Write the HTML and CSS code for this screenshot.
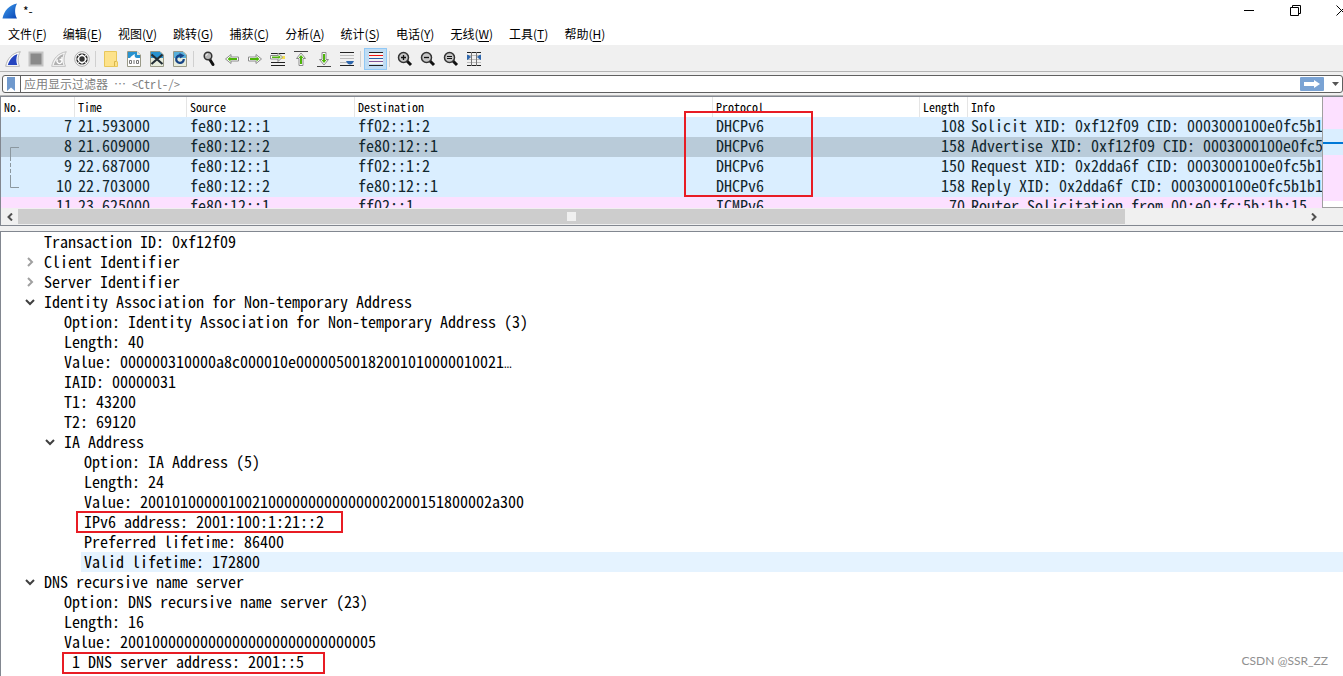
FILE: index.html
```
<!DOCTYPE html>
<html lang="zh-CN">
    <head>
        <meta charset="utf-8">
        <title>*-</title>
        <link rel="stylesheet" href="styles.css">
    </head>
    <body>
        <header class="titlebar">
            <svg class="logo" viewBox="0 0 16 16"><defs><linearGradient id="fin" x1="0" y1="0" x2="1" y2="1"><stop offset="0" stop-color="#3fa0ee"/><stop offset="1" stop-color="#0a45b5"/></linearGradient></defs><path d="M0.5 15.5C2 8 7 2 15 0.5C12.500 5 12.500 11 15 15.500Z" fill="url(#fin)"/></svg>
            <span class="title">*-</span>
            <div class="window-buttons">
                <button aria-label="最小化"><svg viewBox="0 0 11 11"><path d="M0 5.500H10"/></svg></button>
                <button aria-label="还原"><svg viewBox="0 0 11 11"><path d="M.5 2.500H8.500V10.500H.5ZM2.500 2.500V.5H10.500V8.500H8.500"/></svg></button>
                <button aria-label="关闭"><svg viewBox="0 0 11 11"><path d="M.5 .5L10.500 10.500M10.500 .5L.5 10.500"/></svg></button>
            </div>
        </header>

        <nav class="menu">
            <button>文件(<u>F</u>)</button>
            <button>编辑(<u>E</u>)</button>
            <button>视图(<u>V</u>)</button>
            <button>跳转(<u>G</u>)</button>
            <button>捕获(<u>C</u>)</button>
            <button>分析(<u>A</u>)</button>
            <button>统计(<u>S</u>)</button>
            <button>电话(<u>Y</u>)</button>
            <button>无线(<u>W</u>)</button>
            <button>工具(<u>T</u>)</button>
            <button>帮助(<u>H</u>)</button>
        </nav>

        <div class="toolbar">
            <button aria-label="开始捕获"><svg viewBox="0 0 16 16"><path d="M.7 15.300C2 8 7 2 15.300 .7C12.500 5 12.500 11 14.500 15.300Z" fill="#fff" stroke="#b5b5b5"/><path d="M2.800 14C4.500 8.500 8 4.500 12.500 3C11 7 11 11 12.300 14Z" fill="#2545bf"/></svg></button>
            <button aria-label="停止捕获" disabled><svg viewBox="0 0 16 16"><path d="M1.500 1.500H14.500V14.500H1.500Z" fill="#8a8a8a" stroke="#c4c4c4" stroke-width="2"/></svg></button>
            <button aria-label="重新开始" disabled><svg viewBox="0 0 16 16"><path d="M.7 15.300C2 8 7 2 15.300 .7C12.500 5 12.500 11 14.500 15.300Z" fill="#f4f4f4" stroke="#c0c0c0"/><path d="M2.800 14C4.500 8.500 8 4.500 12.500 3C11 7 11 11 12.300 14Z" fill="#b0b0b0"/><path d="M6.500 8.500A2.500 2.500 0 1 0 10.500 8.500M11 6V8.500H8.500" fill="none" stroke="#fff" stroke-width="1.300"/></svg></button>
            <button aria-label="捕获选项"><svg viewBox="0 0 16 16"><circle cx="8" cy="8" r="7.300" fill="#fff" stroke="#aaa"/><circle cx="8" cy="8" r="5.800" fill="#2d2d2d"/><circle cx="8" cy="8" r="3.500" fill="none" stroke="#fff" stroke-width="1.600"/><path d="M8 2.500V5M8 11V13.500M2.500 8H5M11 8H13.500M4.200 4.200L6 6M10 10L11.800 11.800M11.800 4.200L10 6M6 10L4.200 11.800" stroke="#fff"/><circle cx="8" cy="8" r="2" fill="#333"/></svg></button>
            <span class="sep"></span>
            <button aria-label="打开"><svg viewBox="0 0 16 16"><path d="M1.500 .5H13.500V10L14.500 11V15.500H1.500Z" fill="#fde28a" stroke="#e8c75a"/><path d="M11.500 15V10.500H13.500" fill="none" stroke="#d9b64a"/></svg></button>
            <button aria-label="保存"><svg viewBox="0 0 16 16"><path d="M1.500 .5H11L14.500 4V15.500H1.500Z" fill="#fff" stroke="#9a9a88"/><path d="M2 1H11L14 4V7H2Z" fill="#2892cf"/><path d="M4 7C5 5 7 4 9 3C8 5 9 7 11 7Z" fill="#fff"/><path d="M11 .5V4H14.500" fill="#e9e9dc"/><path d="M3.500 9.500H5.500V12.500H3.500ZM8 9V13M10.500 9.500H12.500V12.500H10.500Z" fill="none" stroke="#777"/></svg></button>
            <button aria-label="关闭文件"><svg viewBox="0 0 16 16"><path d="M1.500 .5H11L14.500 4V15.500H1.500Z" fill="#e8eddd" stroke="#9a9a88"/><path d="M2 1H11L14 4V7H2Z" fill="#2892cf"/><path d="M2.500 3.500L13.500 13M13.500 3.500L2.500 13" stroke="#222d35" stroke-width="2.200"/></svg></button>
            <button aria-label="重新加载"><svg viewBox="0 0 16 16"><path d="M1.500 .5H11L14.500 4V15.500H1.500Z" fill="#e8eddd" stroke="#9a9a88"/><path d="M2 1H11L14 4V7H2Z" fill="#59afd9"/><path d="M9 4.500A3.800 3.800 0 1 0 11.800 8" fill="none" stroke="#164487" stroke-width="2.200"/><path d="M7.500 2L12.500 4.500L8 7.500Z" fill="#164487"/></svg></button>
            <span class="sep"></span>
            <button aria-label="查找"><svg viewBox="0 0 16 16"><path d="M8.500 8L12 13.500" stroke="#111" stroke-width="3" stroke-linecap="round"/><circle cx="7" cy="5" r="3.800" fill="#b8b8b8" stroke="#333" stroke-width="1.500"/><path d="M5 5A2 2 0 0 1 7 3" fill="none" stroke="#eee"/></svg></button>
            <button aria-label="上一分组"><svg viewBox="0 0 16 16"><path class="arrow" d="M1.500 8L7 3.500V6H14.500V10H7V12.500Z"/><path class="core" d="M3.500 8L6.500 5.500V7H13V9H6.500V10.500Z"/></svg></button>
            <button aria-label="下一分组"><svg viewBox="0 0 16 16"><path class="arrow" d="M14.500 8L9 3.500V6H1.500V10H9V12.500Z"/><path class="core" d="M12.500 8L9.500 5.500V7H3V9H9.500V10.500Z"/></svg></button>
            <button aria-label="转到分组"><svg viewBox="0 0 16 16"><path d="M1 2.500H15M1 11.500H15M1 14.500H15" stroke="#222"/><path d="M9 6.500H15" stroke="#f5df4c" stroke-width="3"/><path class="arrow" d="M12.500 6L8 2V4.500H.5V8H8V10.500Z"/><path class="core" d="M10.800 6L8.500 4V5.500H2V7H8.500V8.200Z"/></svg></button>
            <button aria-label="首个分组"><svg viewBox="0 0 16 16"><path d="M1 .5H15" stroke="#444"/><path class="arrow" d="M8 2L12.500 7.500H10V14.500H6V7.500H3.500Z"/><path class="core" d="M8 4L10.500 7H9V13H7V7H5.500Z"/></svg></button>
            <button aria-label="末个分组"><svg viewBox="0 0 16 16"><path d="M1 15.500H15" stroke="#444"/><path class="arrow" d="M8 14L12.500 8.500H10V1.500H6V8.500H3.500Z"/><path class="core" d="M8 12L10.500 9H9V3H7V9H5.500Z"/></svg></button>
            <button aria-label="自动滚动"><svg viewBox="0 0 16 16"><path d="M1 1.500H15M1 14.500H15" stroke="#222"/><path d="M1 4.500H15M1 7.500H15M1 11.500H8" stroke="#bbb"/><path d="M7 10H15C14 12.500 12.500 13.500 11 13.500S8 12.500 7 10Z" fill="#2f67ad"/></svg></button>
            <span class="sep"></span>
            <button class="pressed" aria-label="着色分组" aria-pressed="true"><svg viewBox="0 0 16 16"><path d="M1 3H15M1 6H15M1 9H15M1 12H15" stroke="#f4f4f4" stroke-width="2"/><path d="M1 1.500H15M1 14.500H15" stroke="#222"/><path d="M1 4.500H15" stroke="#e11"/><path d="M1 7.500H15" stroke="#2b5fa8"/><path d="M1 10.500H15" stroke="#80559a"/></svg></button>
            <span class="sep"></span>
            <button aria-label="放大"><svg viewBox="0 0 16 16"><path d="M10 10L14 14" stroke="#111" stroke-width="3"/><circle cx="6.500" cy="6.500" r="5" fill="#c6c6c6" stroke="#333" stroke-width="1.500"/><path d="M4 6.500H9M6.500 4V9" stroke="#111" stroke-width="1.300"/></svg></button>
            <button aria-label="缩小"><svg viewBox="0 0 16 16"><path d="M10 10L14 14" stroke="#111" stroke-width="3"/><circle cx="6.500" cy="6.500" r="5" fill="#c6c6c6" stroke="#333" stroke-width="1.500"/><path d="M4 6.500H9" stroke="#111" stroke-width="1.300"/></svg></button>
            <button aria-label="正常大小"><svg viewBox="0 0 16 16"><path d="M10 10L14 14" stroke="#111" stroke-width="3"/><circle cx="6.500" cy="6.500" r="5" fill="#c6c6c6" stroke="#333" stroke-width="1.500"/><path d="M4 5.500H9M4 7.500H9" stroke="#111"/></svg></button>
            <button aria-label="调整列宽"><svg viewBox="0 0 16 16"><path d="M1 1.500H15M1 14.500H15" stroke="#222"/><path d="M1 4.500H15M1 8.500H15M1 11.500H15" stroke="#bbb"/><path d="M5.500 1V15M10.500 1V15" stroke="#777"/><path d="M1.500 4L4.500 6L1.500 8.500ZM14.500 4L11.500 6L14.500 8.500Z" fill="#2f67ad" stroke="#2f67ad"/></svg></button>
        </div>

        <form class="filter">
            <div class="filter-box">
                <button type="button" class="bookmark" aria-label="书签"><svg viewBox="0 0 8 14"><path d="M0 0H8V14L4 10.500L0 14Z" fill="#7099cd"/></svg></button>
                <input type="text" aria-label="显示过滤器" placeholder="应用显示过滤器 ⋯ &lt;Ctrl-/&gt;">
                <button type="button" class="apply" aria-label="应用"><svg viewBox="0 0 24 14"><path d="M4 5H14V3L20 7L14 11V9H4Z" fill="#fff"/></svg></button>
                <button type="button" class="recent" aria-label="最近的过滤器"><svg viewBox="0 0 7 4"><path d="M0 0H7L3.500 4Z" fill="#555"/></svg></button>
            </div>
        </form>

        <section class="packets">
            <div class="packet-view">
                <div class="packet-list">
                    <table>
                        <colgroup>
                            <col class="c-no"><col class="c-time"><col class="c-source"><col class="c-dest"><col class="c-protocol"><col class="c-length"><col>
                        </colgroup>
                        <thead>
                            <tr><th>No.</th><th>Time</th><th>Source</th><th>Destination</th><th>Protocol</th><th>Length</th><th>Info</th></tr>
                        </thead>
                        <tbody>
                            <tr class="udp"><td class="num">7</td><td>21.593000</td><td>fe80:12::1</td><td>ff02::1:2</td><td>DHCPv6</td><td class="num">108</td><td>Solicit XID: 0xf12f09 CID: 0003000100e0fc5b1b15</td></tr>
                            <tr class="udp selected"><td class="num"><svg class="related" viewBox="0 0 10 41"><path d="M9 .5H.5V14M.5 16V20M.5 22V26M.5 28V40.500H9"/></svg>8</td><td>21.609000</td><td>fe80:12::2</td><td>fe80:12::1</td><td>DHCPv6</td><td class="num">158</td><td>Advertise XID: 0xf12f09 CID: 0003000100e0fc5b1b15</td></tr>
                            <tr class="udp"><td class="num">9</td><td>22.687000</td><td>fe80:12::1</td><td>ff02::1:2</td><td>DHCPv6</td><td class="num">150</td><td>Request XID: 0x2dda6f CID: 0003000100e0fc5b1b15</td></tr>
                            <tr class="udp"><td class="num">10</td><td>22.703000</td><td>fe80:12::2</td><td>fe80:12::1</td><td>DHCPv6</td><td class="num">158</td><td>Reply XID: 0x2dda6f CID: 0003000100e0fc5b1b15</td></tr>
                            <tr class="icmp"><td class="num">11</td><td>23.625000</td><td>fe80:12::1</td><td>ff02::1</td><td>ICMPv6</td><td class="num">70</td><td>Router Solicitation from 00:e0:fc:5b:1b:15</td></tr>
                        </tbody>
                    </table>
                </div>
                <div class="minimap"></div>
            </div>
            <div class="scrollbar">
                <button aria-label="向左滚动"><svg viewBox="0 0 6 8"><path d="M5 .5L1.500 4L5 7.500"/></svg></button>
                <div class="track"><div class="thumb"><span class="grip"></span></div></div>
                <button aria-label="向右滚动"><svg viewBox="0 0 6 8"><path d="M1 .5L4.500 4L1 7.500"/></svg></button>
                <span class="corner"></span>
            </div>
            <div class="mark mark-protocol"></div>
        </section>

        <section class="details">
            <ul class="tree">
                <li><div class="row">Transaction ID: 0xf12f09</div></li>
                <li><div class="row"><button class="toggle" aria-label="展开"><svg viewBox="0 0 10 10"><path d="M3 1L7 5L3 9"/></svg></button>Client Identifier</div></li>
                <li><div class="row"><button class="toggle" aria-label="展开"><svg viewBox="0 0 10 10"><path d="M3 1L7 5L3 9"/></svg></button>Server Identifier</div></li>
                <li>
                    <div class="row"><button class="toggle open" aria-label="折叠"><svg viewBox="0 0 10 10"><path d="M1 3L5 7L9 3"/></svg></button>Identity Association for Non-temporary Address</div>
                    <ul>
                        <li><div class="row">Option: Identity Association for Non-temporary Address (3)</div></li>
                        <li><div class="row">Length: 40</div></li>
                        <li><div class="row">Value: 000000310000a8c000010e00000500182001010000010021<span class="more">…</span></div></li>
                        <li><div class="row">IAID: 00000031</div></li>
                        <li><div class="row">T1: 43200</div></li>
                        <li><div class="row">T2: 69120</div></li>
                        <li>
                            <div class="row"><button class="toggle open" aria-label="折叠"><svg viewBox="0 0 10 10"><path d="M1 3L5 7L9 3"/></svg></button>IA Address</div>
                            <ul>
                                <li><div class="row">Option: IA Address (5)</div></li>
                                <li><div class="row">Length: 24</div></li>
                                <li><div class="row">Value: 20010100000100210000000000000002000151800002a300</div></li>
                                <li><div class="row">IPv6 address: 2001:100:1:21::2<span class="mark mark-address"></span></div></li>
                                <li><div class="row">Preferred lifetime: 86400</div></li>
                                <li><div class="row hover">Valid lifetime: 172800</div></li>
                            </ul>
                        </li>
                    </ul>
                </li>
                <li>
                    <div class="row"><button class="toggle open" aria-label="折叠"><svg viewBox="0 0 10 10"><path d="M1 3L5 7L9 3"/></svg></button>DNS recursive name server</div>
                    <ul>
                        <li><div class="row">Option: DNS recursive name server (23)</div></li>
                        <li><div class="row">Length: 16</div></li>
                        <li><div class="row">Value: 20010000000000000000000000000005</div></li>
                        <li><div class="row"> 1 DNS server address: 2001::5<span class="mark mark-dns"></span></div></li>
                    </ul>
                </li>
            </ul>
            <span class="watermark">CSDN @SSR_ZZ</span>
        </section>
    </body>
</html>
```
FILE: styles.css
```
* {
    box-sizing: border-box;
}
body {
    display: flex;
    flex-direction: column;
    height: 100vh;
    margin: 0;
    overflow: hidden;
    background: #f0f0f0;
    color: #000;
    font-family: "Noto Sans CJK SC", sans-serif;
    font-size: 12px;
}
button {
    padding: 0;
    border: 0;
    background: none;
    color: inherit;
    font: inherit;
}
svg {
    display: block;
}
.titlebar {
    display: flex;
    flex: none;
    align-items: flex-start;
    height: 23px;
    padding: 3px 0 0 2px;
    overflow: hidden;
    background: #fff;
}
.logo {
    width: 16px;
    height: 16px;
}
.title {
    margin-left: 5px;
    line-height: 16px;
}
.window-buttons {
    display: flex;
    margin-left: auto;
    margin-right: -21px;
}
.window-buttons button {
    display: flex;
    justify-content: center;
    width: 46px;
    padding-top: 2px;
}
.window-buttons svg {
    width: 11px;
    height: 11px;
    fill: none;
    stroke: #000;
}
.menu {
    display: flex;
    flex: none;
    height: 24px;
    border-bottom: 2px solid #f0f0f0;
    background: #fff;
}
.menu button {
    padding: 0 8px;
    line-height: 22px;
}
.menu u {
    text-underline-offset: 2px;
}
.toolbar {
    display: flex;
    flex: none;
    align-items: center;
    height: 25px;
    padding-left: 1px;
    border-bottom: 1px solid #b4b4b4;
}
.toolbar button {
    display: flex;
    align-items: center;
    justify-content: center;
    width: 23px;
    height: 22px;
}
.toolbar svg {
    width: 16px;
    height: 16px;
}
.toolbar .pressed {
    border: 1px solid #90c8f6;
    background: #c0dcf3;
}
.sep {
    width: 1px;
    height: 16px;
    margin: 0 3px 0 2px;
    background: #d0d0d0;
}
.arrow {
    fill: #fff;
    stroke: #8c8c8c;
}
.core {
    fill: #4fb50b;
}
.filter {
    flex: none;
    padding: 3px 0 2px 2px;
    border-bottom: 1px solid #b4b4b4;
}
.filter-box {
    display: flex;
    align-items: center;
    height: 18px;
    border: 1px solid #606060;
    border-radius: 3px;
    background: #fff;
}
.bookmark {
    align-self: stretch;
    width: 18px;
    padding: 0 4px;
    border-right: 1px solid #606060;
}
.bookmark svg {
    width: 8px;
    height: 14px;
}
.filter input {
    flex: 1;
    min-width: 0;
    height: 16px;
    padding: 0 3px 2px;
    border: 0;
    outline: 0;
    background: none;
    font: 12px "Noto Sans Mono CJK SC", "Liberation Mono", monospace;
}
.filter input::placeholder {
    color: #808080;
}
.apply {
    width: 24px;
    height: 14px;
    border-radius: 1px;
    background: #7aa3d4;
}
.recent {
    width: 18px;
    padding-left: 8px;
}
.recent svg {
    width: 7px;
    height: 4px;
}
.packets {
    position: relative;
    flex: none;
    border: 1px solid #828790;
    border-right: 0;
}
.packet-view {
    display: flex;
    height: 112px;
}
.packet-list {
    flex: 1;
    min-width: 0;
    height: 111px;
    overflow: hidden;
    background: #fff;
}
table {
    width: 100%;
    table-layout: fixed;
    border-spacing: 0;
}
.c-no {
    width: 74px;
}
.c-time {
    width: 112px;
}
.c-source {
    width: 168px;
}
.c-dest {
    width: 358px;
}
.c-protocol {
    width: 207px;
}
.c-length {
    width: 48px;
}
th {
    height: 20px;
    padding: 0 3px;
    border-right: 1px solid #e5e5e5;
    font: 12px/20px "Noto Sans Mono CJK SC", "Liberation Mono", monospace;
    text-align: left;
}
th:last-child {
    border-right: 0;
}
td {
    height: 20px;
    padding: 0 0 4px 3px;
    color: #12272e;
    font: 16px/16px "Noto Sans Mono CJK SC", "Liberation Mono", monospace;
    white-space: nowrap;
}
.num {
    position: relative;
    padding-right: 3px;
    text-align: right;
}
.udp {
    background: #daeeff;
}
.selected {
    background: #b9cbd9;
}
.icmp {
    background: #fce0ff;
}
/* bracket joining the request and its reply */
.related {
    position: absolute;
    top: 10px;
    left: 9px;
    z-index: 1;
    width: 10px;
    height: 41px;
    fill: none;
    stroke: #8b979f;
}
.minimap {
    width: 21px;
    height: 111px;
    border-left: 1px solid #a0a0a0;
    border-bottom: 1px solid #a0a0a0;
    background: linear-gradient(#fce0ff 32px, #daeeff 32px, #daeeff 45px, #0078d7 45px, #0078d7 47px, #daeeff 47px, #daeeff 58px, #fce0ff 58px, #fce0ff 104px, #fff 104px);
}
.scrollbar {
    display: flex;
    height: 16px;
}
.scrollbar button {
    display: flex;
    align-items: center;
    justify-content: center;
    width: 17px;
}
.scrollbar svg {
    width: 6px;
    height: 8px;
    fill: none;
    stroke: #505050;
    stroke-width: 2;
}
.track {
    flex: 1;
}
.thumb {
    display: flex;
    align-items: center;
    justify-content: center;
    width: 86%;
    height: 15px;
    background: #cdcdcd;
}
.grip {
    width: 9px;
    height: 9px;
    background: #f0f0f0;
}
.corner {
    width: 21px;
}
.mark {
    position: absolute;
    border: 2px solid #e81c24;
}
.mark-protocol {
    top: 14px;
    left: 683px;
    width: 129px;
    height: 86px;
}
.details {
    position: relative;
    flex: 1;
    min-height: 0;
    margin-top: 5px;
    overflow: hidden;
    border-top: 1px solid #828790;
    border-left: 1px solid #828790;
    background: #fff;
    font: 16px/18px "Noto Sans Mono CJK SC", "Liberation Mono", monospace;
}
.tree,
.tree ul {
    margin: 0;
    padding: 0 0 0 20px;
    list-style: none;
}
.tree {
    padding-left: 40px;
}
.row {
    position: relative;
    height: 20px;
    padding-left: 3px;
    white-space: pre;
}
.hover {
    background: #e5f3ff;
}
.more {
    font-family: "Liberation Mono", monospace;
    font-size: 13px;
}
.toggle {
    position: absolute;
    top: 5px;
    left: -16px;
}
.toggle svg {
    width: 10px;
    height: 10px;
    fill: none;
    stroke: #a0a0a0;
    stroke-width: 2;
}
.open svg {
    stroke: #404040;
}
.mark-address {
    top: -1px;
    left: -5px;
    width: 267px;
    height: 22px;
}
.mark-dns {
    top: 0;
    left: 1px;
    width: 263px;
    height: 22px;
}
.watermark {
    position: absolute;
    right: 15px;
    bottom: 5px;
    color: #8f8f8f;
    font: 12px/20px Lato, "Liberation Sans", sans-serif;
}
```
